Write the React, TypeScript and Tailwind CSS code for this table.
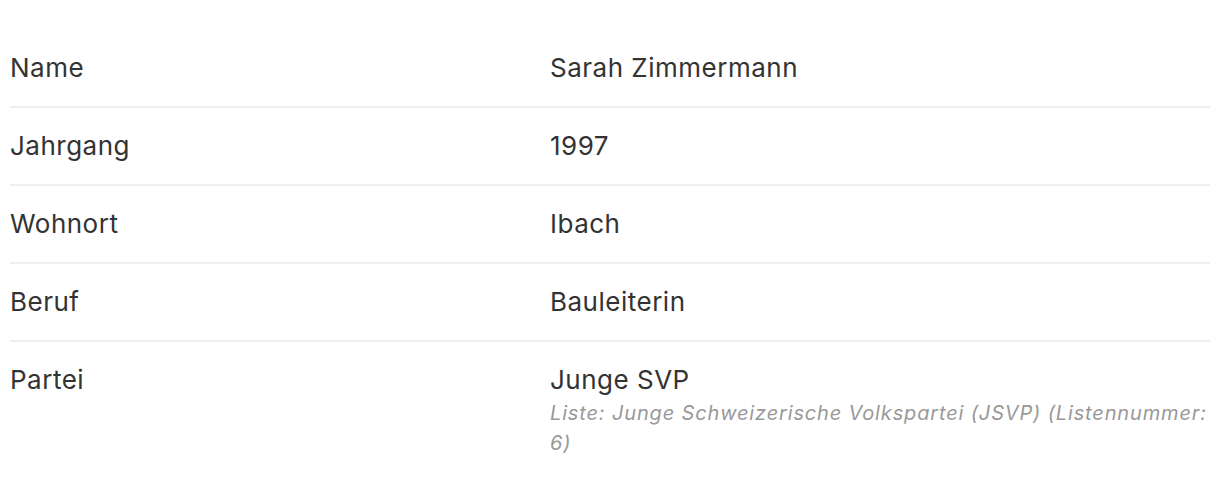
export default function App() {
  const rows = [
    { label: "Name", value: "Sarah Zimmermann" },
    { label: "Jahrgang", value: "1997" },
    { label: "Wohnort", value: "Ibach" },
    { label: "Beruf", value: "Bauleiterin" },
  ];
  return (
    <div className="bg-white w-[1220px] h-[488px] px-[10px] pt-[30px] text-[#333333]" style={{ fontFamily: 'Inter, sans-serif' }}>
      <div className="flex flex-col">
        {rows.map((r) => (
          <div key={r.label} className="flex border-b-2 border-[#eeeeee] py-[20px] text-[26px] leading-[36px] tracking-[0.5px]">
            <div className="w-[540px] shrink-0">{r.label}</div>
            <div className="flex-1">{r.value}</div>
          </div>
        ))}
        <div className="flex py-[20px] text-[26px] leading-[36px] tracking-[0.5px]">
          <div className="w-[540px] shrink-0">Partei</div>
          <div className="flex-1">
            <div>Junge SVP</div>
            <div className="text-[20px] leading-[30px] italic text-[#999999] tracking-[0.85px]">
              Liste: Junge Schweizerische Volkspartei (JSVP) (Listennummer: 6)
            </div>
          </div>
        </div>
      </div>
    </div>
  );
}
